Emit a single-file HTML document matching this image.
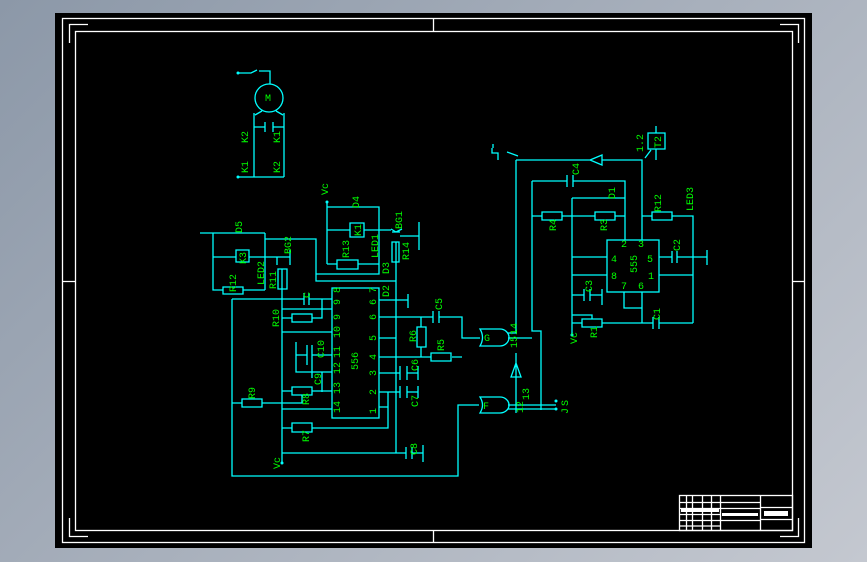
<!DOCTYPE html><html><head><style>
html,body{margin:0;padding:0;width:867px;height:562px;overflow:hidden;background:linear-gradient(135deg,#8c98a8 0%,#a8b0bc 50%,#c4c8d0 100%);}
svg{position:absolute;left:0;top:0}
text{font-family:"Liberation Mono",monospace;fill:#00ff00;font-size:10px}
</style></head><body>
<svg width="867" height="562" viewBox="0 0 867 562">
<rect x="55" y="13" width="757" height="535" fill="#000"/>
<g stroke="#fff" stroke-width="1.3" fill="none">
<rect x="62.5" y="18.5" width="742" height="524"/>
<rect x="75.5" y="31.5" width="717" height="499"/>
<path d="M69.5 43V24.5H88M69.5 518V536.5H88M798.5 43V24.5H780M798.5 518V536.5H780M433.5 18V31M433.5 530V543M62 281.5H75M792 281.5H805"/>
<rect x="679.5" y="495.5" width="113" height="35"/>
<path d="M679.5 502.5H760M679.5 508.5H760M679.5 514.5H720M679.5 520.5H760M679.5 526H720M760.5 495.5V530.5M760.5 507.5H792.5M760.5 519.5H792.5M720.5 495.5V530.5M686.5 495.5V530.5M692.5 495.5V530.5M702.5 495.5V530.5M711.5 495.5V530.5"/>
</g>
<g fill="#fff"><rect x="681" y="509" width="38" height="3"/><rect x="722" y="513" width="36" height="3"/><rect x="764" y="511" width="24" height="5"/></g>
<g stroke="#00ffff" stroke-width="1.3" fill="none">
<path d="M237 73H251L257 70M259 71H270V84M254 113V177M284 113V177M237 177H284M254 127H265M273 127H284M265 122V132M273 122V132M255 115L262 111M283 115L276 111"/>
<circle cx="269" cy="98" r="14"/>
<rect x="332" y="288" width="47" height="130"/>
<path d="M232 299V476H458V405H479M232 299H304M309 299H332M304 293V305M309 293V305"/>
<path d="M282 269V463M278 269h9v20h-9zM282 309H332M282 318H292M312 318H322V299M282 332H332"/>
<rect x="292" y="314" width="20" height="8"/>
<path d="M296 342V372H307M296 355H307M307 345V365M312 345V365M312 355H332M307 372H312M312 365V378M312 372H332M322 372V392"/>
<path d="M232 403H242M262 403H302V395M242 399h20v8h-20zM282 391H292M312 391H332M292 387h20v8h-20zM282 409H332M282 428H292M312 428H388V392M292 423h20v9h-20zM282 453H406M412 453H423M406 447V459M412 447V459M423 445V462"/>
<path d="M379 300H408M408 294V308M379 317H433M439 317H462V338H480M433 311V323M439 311V323M379 338H396M379 357H431M452 357H462M431 353h20v8h-20zM421 317V327M421 347V357M417 327h9v20h-9zM379 373H400M407 373H418M400 366V380M407 366V380M418 366V380M379 392H400M407 392H418M400 386V398M407 386V398M418 386V398M379 407H388"/>
<path d="M396 242V453M392 242h7v20h-7zM396 232L391 229M396 232L402 229M392 232H400M419 222V250M400 236H419"/>
<path d="M200 233H265M213 233V290H223M243 290H265M223 287h20v7h-20zM213 257H236M249 257H277M236 250h13v12h-13zM265 233V290M265 239H316V281H396M316 274H379V207H327V264M327 202V264M327 230H350M364 230H391M350 223h14v14h-14zM327 264H337M358 264H379M337 260h21v9h-21zM277 257V265M270 257H290M290 250V265"/>
<path d="M480 329H500A9 8.5 0 0 1 500 346H480Q485 337.5 480 329ZM480 397H500A9 8 0 0 1 500 413H480Q485 405 480 397Z"/>
<path d="M516 160V333H508M516 353V413M516 363L511 377H521Z M508 338H532M508 405H556M508 409H556M532 181V331H541V410M516 160H590M602 160H642V240M590 160L602 155V165Z"/>
<path d="M648 133h17v16h-17zM656 126V133M656 149V160M651 150L645 158"/>
<path d="M532 181H567M573 181H625V240M567 175V187M573 175V187M572 198V335M572 198H625M532 216H542M562 216H595M615 216H625M542 212h20v8h-20zM595 212h20v8h-20z"/>
<rect x="607" y="240" width="52" height="52"/>
<path d="M642 216H652M672 216H693V323M652 212h20v8h-20zM659 257H672M677 257H707M672 251V263M677 251V263M707 250V265M659 275H693M572 257H607M572 275H607M572 295H584M590 295H602M584 289V301M590 289V301M602 289V305M624 292V308H642M642 292V323M572 315H592V319M572 323H582M602 323H653M659 323H693M653 317V329M659 317V329M582 319h20v8h-20z"/>
<path d="M492 148V153H498V160M493 144V148M507 152L518 156"/>
</g>
<g fill="#00ffff"><circle cx="556" cy="401" r="1.5"/><circle cx="556" cy="409" r="1.5"/><circle cx="327" cy="202" r="1.5"/><circle cx="238" cy="73" r="1.5"/><circle cx="238" cy="177" r="1.5"/><circle cx="572" cy="335" r="1.5"/><circle cx="282" cy="463" r="1.5"/></g>
<g>
<text transform="translate(248,143) rotate(-90)">K2</text><text transform="translate(248,173) rotate(-90)">K1</text>
<text transform="translate(280,143) rotate(-90)">K1</text><text transform="translate(280,173) rotate(-90)">K2</text>
<text x="265" y="101" font-size="7">M</text>
<text transform="translate(242,233) rotate(-90)">D5</text><text transform="translate(246,264) rotate(-90)">K3</text>
<text transform="translate(236,292) rotate(-90)">R12</text><text transform="translate(264,285) rotate(-90)">LED2</text>
<text transform="translate(276,289) rotate(-90)">R11</text><text transform="translate(291,254) rotate(-90)">BG2</text>
<text transform="translate(310,298) rotate(-90)">C</text><text transform="translate(279,327) rotate(-90)">R10</text>
<text transform="translate(328,195) rotate(-90)" font-size="7">Vc</text><text transform="translate(359,208) rotate(-90)">D4</text>
<text transform="translate(361,236) rotate(-90)">K1</text><text transform="translate(349,258) rotate(-90)">R13</text>
<text transform="translate(378,258) rotate(-90)">LED1</text><text transform="translate(402,229) rotate(-90)">BG1</text>
<text transform="translate(409,260) rotate(-90)">R14</text><text transform="translate(389,274) rotate(-90)">D3</text>
<text transform="translate(389,297) rotate(-90)">D2</text>
<text transform="translate(340,305) rotate(-90)">9 8</text><text transform="translate(340,320) rotate(-90)">9</text>
<text transform="translate(340,338) rotate(-90)">10</text><text transform="translate(340,358) rotate(-90)">11</text>
<text transform="translate(340,374) rotate(-90)">12</text><text transform="translate(340,394) rotate(-90)">13</text>
<text transform="translate(340,413) rotate(-90)">14</text>
<text transform="translate(376,305) rotate(-90)">6 7</text><text transform="translate(376,320) rotate(-90)">6</text>
<text transform="translate(376,341) rotate(-90)">5</text><text transform="translate(376,360) rotate(-90)">4</text>
<text transform="translate(376,376) rotate(-90)">3</text><text transform="translate(376,395) rotate(-90)">2</text>
<text transform="translate(376,414) rotate(-90)">1</text><text transform="translate(358,370) rotate(-90)">556</text>
<text transform="translate(324,358) rotate(-90)">C10</text><text transform="translate(321,385) rotate(-90)">C9</text>
<text transform="translate(255,399) rotate(-90)">R9</text><text transform="translate(309,405) rotate(-90)">R8</text>
<text transform="translate(309,442) rotate(-90)">R7</text><text transform="translate(280,469) rotate(-90)" font-size="7">Vc</text>
<text transform="translate(418,371) rotate(-90)">C6</text><text transform="translate(418,407) rotate(-90)">C7</text>
<text transform="translate(417,455) rotate(-90)">C8</text><text transform="translate(442,310) rotate(-90)">C5</text>
<text transform="translate(416,342) rotate(-90)">R6</text><text transform="translate(444,351) rotate(-90)">R5</text>
<text x="484" y="341">G</text><text x="483" y="409">F</text>
<text transform="translate(517,335) rotate(-90)">14</text><text transform="translate(517,348) rotate(-90)">15</text>
<text transform="translate(529,400) rotate(-90)">13</text><text transform="translate(523,413) rotate(-90)">12</text>
<text transform="translate(568,406) rotate(-90)">S</text><text transform="translate(568,414) rotate(-90)">J</text>
<text transform="translate(579,175) rotate(-90)">C4</text><text transform="translate(615,199) rotate(-90)">D1</text>
<text transform="translate(556,231) rotate(-90)">R4</text><text transform="translate(607,231) rotate(-90)">R3</text>
<text transform="translate(661,212) rotate(-90)">R12</text><text transform="translate(693,211) rotate(-90)">LED3</text>
<text transform="translate(643,152) rotate(-90)">1.2</text><text transform="translate(661,148) rotate(-90)">T2</text>
<text x="621" y="247">2</text><text x="638" y="247">3</text><text x="611" y="262">4</text><text x="647" y="262">5</text>
<text x="611" y="279">8</text><text x="648" y="279">1</text><text x="621" y="289">7</text><text x="638" y="289">6</text>
<text transform="translate(637,273) rotate(-90)">555</text>
<text transform="translate(680,251) rotate(-90)">C2</text><text transform="translate(592,292) rotate(-90)">C3</text>
<text transform="translate(660,320) rotate(-90)">C1</text><text transform="translate(597,338) rotate(-90)">R1</text>
<text transform="translate(577,344) rotate(-90)" font-size="7">Vc</text>
</g>
</svg></body></html>
